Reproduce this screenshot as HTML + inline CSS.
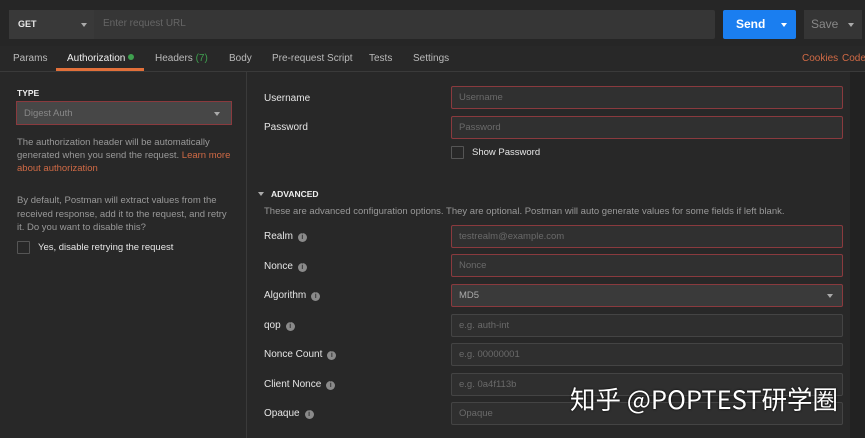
<!DOCTYPE html>
<html><head><meta charset="utf-8"><style>
*{box-sizing:border-box;margin:0;padding:0}
body{width:865px;height:438px;background:#282828;font-family:"Liberation Sans","Noto Sans CJK SC",sans-serif;font-size:10px;color:#c8c8c8;position:relative;overflow:hidden}
.a{position:absolute}
.top{left:0;top:0;width:865px;height:46px;background:#262626}
.url{left:9px;top:10px;width:706px;height:29px;background:#363636;border-radius:2px}
.get{left:9px;top:10px;width:85px;height:29px;background:#393939;color:#e8e8e8;font-weight:bold;padding:9px 9px;font-size:9px}
.tri{width:0;height:0;border-left:3.5px solid transparent;border-right:3.5px solid transparent;border-top:4px solid #aaa}
.send{left:723px;top:10px;width:73px;height:29px;background:#1a7ef0;border-radius:2px;color:#fff;font-size:12px;font-weight:bold;padding:7px 13px}
.save{left:804px;top:10px;width:58px;height:29px;background:#353535;color:#888;font-size:12px;padding:7px 7px}
.tabs{left:0;top:46px;width:865px;height:26px;border-bottom:1px solid #3a3a3a;background:#282828}
.tab{top:53px;font-size:10px;color:#bbb}
.inp{left:451px;width:392px;height:23px;background:#2f2f2f;border:1px solid #444;border-radius:2px;color:#6a6a6a;padding:5px 7px;font-size:9.5px}
.red{border-color:#8a3a3e;background:#303030}
.lab{left:264px;color:#e6e6e6;font-size:10px}
.i{display:inline-block;width:9px;height:9px;border-radius:50%;background:#8a8a8a;color:#333;font-size:7px;text-align:center;line-height:9px;font-weight:bold;margin-left:5px;vertical-align:0px}
.cb{width:13px;height:13px;border:1px solid #555;border-radius:1px}
</style></head><body>
<div class="a top"></div>
<div class="a url"></div>
<div class="a get">GET<div class="a tri" style="left:72px;top:13px"></div></div>
<div class="a" style="left:103px;top:18px;color:#666;font-size:10px">Enter request URL</div>
<div class="a send">Send<div class="a tri" style="left:58px;top:13px;border-top-color:#fff"></div></div>
<div class="a save">Save<div class="a tri" style="left:44px;top:13px"></div></div>
<div class="a tabs"></div>
<div class="a tab" style="left:13px">Params</div>
<div class="a tab" style="left:67px;color:#f0f0f0">Authorization <span style="display:inline-block;width:6px;height:6px;border-radius:50%;background:#3fa04f;vertical-align:1px"></span></div>
<div class="a" style="left:56px;top:68px;width:88px;height:3px;background:#e2703a"></div>
<div class="a tab" style="left:155px">Headers <span style="color:#3fa04f">(7)</span></div>
<div class="a tab" style="left:229px">Body</div>
<div class="a tab" style="left:272px">Pre-request Script</div>
<div class="a tab" style="left:369px">Tests</div>
<div class="a tab" style="left:413px">Settings</div>
<div class="a tab" style="left:802px;color:#d06a45">Cookies</div>
<div class="a tab" style="left:842px;color:#d06a45">Code</div>
<div class="a" style="left:246px;top:72px;width:1px;height:366px;background:#3a3a3a"></div>
<div class="a" style="left:850px;top:72px;width:15px;height:366px;background:#222"></div>
<div class="a" style="left:17px;top:88px;font-weight:bold;font-size:8.5px;color:#eee">TYPE</div>
<div class="a" style="left:16px;top:101px;width:216px;height:24px;background:#474747;border:1px solid #8a3a3e;color:#888;padding:6px 7px;font-size:9.5px">Digest Auth<div class="a tri" style="left:197px;top:10px"></div></div>
<div class="a" style="left:17px;top:136px;width:220px;line-height:13px;color:#999;font-size:9.5px">The authorization header will be automatically<br>generated when you send the request. <span style="color:#d06a45">Learn more<br>about authorization</span></div>
<div class="a" style="left:17px;top:194px;width:225px;line-height:13.5px;color:#999;font-size:9.5px">By default, Postman will extract values from the<br>received response, add it to the request, and retry<br>it. Do you want to disable this?</div>
<div class="a cb" style="left:17px;top:241px"></div>
<div class="a" style="left:38px;top:242px;color:#e6e6e6;font-size:9.5px">Yes, disable retrying the request</div>

<div class="a lab" style="top:93px">Username</div><div class="a inp red" style="top:86px">Username</div>
<div class="a lab" style="top:122px">Password</div><div class="a inp red" style="top:116px">Password</div>
<div class="a cb" style="left:451px;top:146px"></div>
<div class="a" style="left:472px;top:147px;color:#e6e6e6;font-size:9.5px">Show Password</div>
<div class="a" style="left:258px;top:192px;border-left:3px solid transparent;border-right:3px solid transparent;border-top:4px solid #aaa"></div>
<div class="a" style="left:271px;top:189px;font-weight:bold;font-size:8.5px;color:#eee">ADVANCED</div>
<div class="a" style="left:264px;top:206px;color:#999;font-size:9.5px">These are advanced configuration options. They are optional. Postman will auto generate values for some fields if left blank.</div>
<div class="a lab" style="top:231px">Realm<span class="i">i</span></div><div class="a inp red" style="top:225px">testrealm@example.com</div>
<div class="a lab" style="top:261px">Nonce<span class="i">i</span></div><div class="a inp red" style="top:254px">Nonce</div>
<div class="a lab" style="top:290px">Algorithm<span class="i">i</span></div><div class="a inp red" style="top:284px;background:#3a3a3a;color:#aaa">MD5<div class="a tri" style="left:375px;top:9px"></div></div>
<div class="a lab" style="top:320px">qop<span class="i">i</span></div><div class="a inp" style="top:314px">e.g. auth-int</div>
<div class="a lab" style="top:349px">Nonce Count<span class="i">i</span></div><div class="a inp" style="top:343px">e.g. 00000001</div>
<div class="a lab" style="top:379px">Client Nonce<span class="i">i</span></div><div class="a inp" style="top:373px">e.g. 0a4f113b</div>
<div class="a lab" style="top:408px">Opaque<span class="i">i</span></div><div class="a inp" style="top:402px">Opaque</div>
<div class="a" style="left:570px;top:384px;color:#fff;font-size:25.5px;white-space:nowrap;text-shadow:0 0 2px #000;font-family:'Noto Sans CJK SC','Liberation Sans',sans-serif;line-height:30px">知乎 @POPTEST研学圈</div>
</body></html>
